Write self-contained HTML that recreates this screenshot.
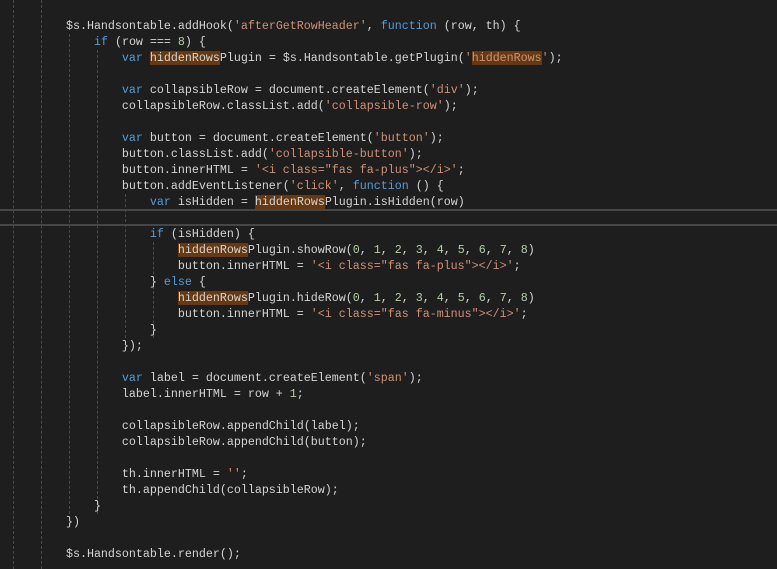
<!DOCTYPE html>
<html><head><style>
html,body{margin:0;padding:0;background:#1e1e1e;width:777px;height:569px;overflow:hidden}
.g{position:absolute;width:0;border-left:1px dashed #4a4a4a}
.cur{position:absolute;left:0;width:777px;top:209px;height:13px;border-top:2px solid #464646;border-bottom:2px solid #464646}
pre{position:absolute;left:10px;top:-14px;margin:0;font-family:"Liberation Mono",monospace;font-size:11.67px;line-height:16px;color:#d4d4d4}
.k{color:#569cd6}.s{color:#ce9178}.n{color:#b5cea8}
.h{background:#653a12}
</style></head><body>
<div class="cur"></div>
<div class="g" style="left:13px;top:0;height:569px"></div>
<div class="g" style="left:41px;top:0;height:569px"></div>
<div class="g" style="left:69px;top:34px;height:480px"></div>
<div class="g" style="left:97px;top:50px;height:464px"></div>
<div class="g" style="left:125px;top:194px;height:144px"></div>
<div class="g" style="left:153px;top:242px;height:96px"></div>
<pre>        }

        $s.Handsontable.addHook(<span class="s">'afterGetRowHeader'</span>, <span class="k">function</span> (row, th) {
            <span class="k">if</span> (row === <span class="n">8</span>) {
                <span class="k">var</span> <span class="h">hiddenRows</span>Plugin = $s.Handsontable.getPlugin(<span class="s">'<span class="h">hiddenRows</span>'</span>);

                <span class="k">var</span> collapsibleRow = document.createElement(<span class="s">'div'</span>);
                collapsibleRow.classList.add(<span class="s">'collapsible-row'</span>);

                <span class="k">var</span> button = document.createElement(<span class="s">'button'</span>);
                button.classList.add(<span class="s">'collapsible-button'</span>);
                button.innerHTML = <span class="s">'&lt;i class="fas fa-plus"&gt;&lt;/i&gt;'</span>;
                button.addEventListener(<span class="s">'click'</span>, <span class="k">function</span> () {
                    <span class="k">var</span> isHidden = <span class="h">hiddenRows</span>Plugin.isHidden(row)

                    <span class="k">if</span> (isHidden) {
                        <span class="h">hiddenRows</span>Plugin.showRow(<span class="n">0</span>, <span class="n">1</span>, <span class="n">2</span>, <span class="n">3</span>, <span class="n">4</span>, <span class="n">5</span>, <span class="n">6</span>, <span class="n">7</span>, <span class="n">8</span>)
                        button.innerHTML = <span class="s">'&lt;i class="fas fa-plus"&gt;&lt;/i&gt;'</span>;
                    } <span class="k">else</span> {
                        <span class="h">hiddenRows</span>Plugin.hideRow(<span class="n">0</span>, <span class="n">1</span>, <span class="n">2</span>, <span class="n">3</span>, <span class="n">4</span>, <span class="n">5</span>, <span class="n">6</span>, <span class="n">7</span>, <span class="n">8</span>)
                        button.innerHTML = <span class="s">'&lt;i class="fas fa-minus"&gt;&lt;/i&gt;'</span>;
                    }
                });

                <span class="k">var</span> label = document.createElement(<span class="s">'span'</span>);
                label.innerHTML = row + <span class="n">1</span>;

                collapsibleRow.appendChild(label);
                collapsibleRow.appendChild(button);

                th.innerHTML = <span class="s">''</span>;
                th.appendChild(collapsibleRow);
            }
        })

        $s.Handsontable.render();
</pre>
</body></html>
